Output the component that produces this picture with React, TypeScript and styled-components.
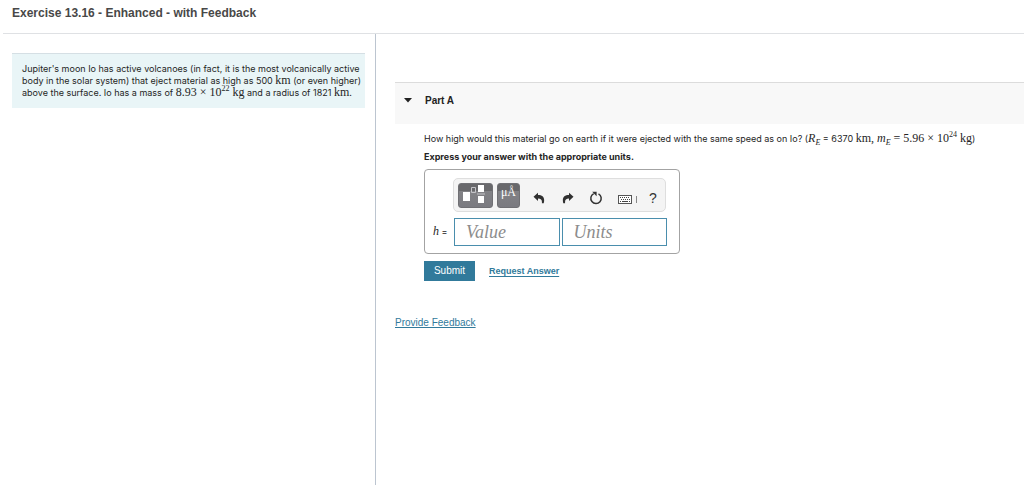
import React from "react";
import styled, { createGlobalStyle } from "styled-components";

const GlobalStyle = createGlobalStyle`
  * { box-sizing: border-box; }
  body {
    margin: 0;
    background: #fff;
    color: #252525;
    font-family: Inter, "Liberation Sans", Arial, sans-serif;
    font-size: 9px;
    line-height: 12px;
  }
`;

const Page = styled.div`
  min-height: 100vh;
  display: flex;
  flex-direction: column;
`;

const Header = styled.header`
  margin-left: 3px;
  padding: 5px 9px 12px;
  border-bottom: 1px solid #dfe1e4;
`;

const Title = styled.h1`
  margin: 0;
  font-family: "Liberation Sans", Arial, sans-serif;
  font-size: 12px;
  line-height: 16px;
  color: #484848;
`;

const Columns = styled.div`
  flex: 1;
  display: grid;
  grid-template-columns: 47fr 81fr;
`;

const Aside = styled.aside`
  padding: 19px 10px 0 12px;
  border-right: 1px solid #bcc5d0;
`;

const Intro = styled.p`
  margin: 0;
  padding: 9px 0 9px 10px;
  background: #e9f5f7;
  border-top: 1px solid #d5dfe4;
`;

const Main = styled.main`
  min-width: 0;
  padding: 48px 0 20px 19px;
`;

const PartHeader = styled.button`
  width: 100%;
  height: 42px;
  display: flex;
  align-items: flex-start;
  gap: 13px;
  padding: 12px 9px;
  border: 0;
  border-top: 1px solid #dcdcdc;
  background: #f8f8f8;
  color: #222;
  font: bold 10px/12px "Liberation Sans", Arial, sans-serif;
  text-align: left;
`;

const Caret = styled.svg`
  width: 8px;
  height: 12px;
`;

const PartBody = styled.section`
  padding: 9px 10px 0 29px;
`;

const Question = styled.p`
  margin: 0;
`;

const Instruction = styled.p`
  margin: 6px 0;
  font-weight: bold;
`;

const MathText = styled.span`
  font-family: "Liberation Serif", "Times New Roman", serif;
  font-size: 12px;
  line-height: 10px;
  white-space: nowrap;

  sup, sub {
    font-size: 8px;
    line-height: 0;
  }
`;

const AnswerBox = styled.div`
  width: 256px;
  height: 85px;
  padding: 8px 12px 7px 8px;
  display: grid;
  grid-template-columns: 20px 214px;
  grid-template-rows: 34px 28px;
  row-gap: 6px;
  border: 1px solid #a3a3a3;
  border-radius: 4px;
`;

const Toolbar = styled.div`
  grid-column: 2;
  display: flex;
  align-items: center;
  margin-right: 1px;
  padding: 0 4px;
  border: 1px solid #dedede;
  border-radius: 5px;
  background: #f4f4f4;
`;

const TemplateButton = styled.button<{ $wide?: boolean }>`
  flex: none;
  width: ${(p) => (p.$wide ? 35 : 23)}px;
  height: 25px;
  margin-right: ${(p) => (p.$wide ? 4 : 5)}px;
  padding: 0;
  border: 1px solid #707074;
  border-radius: 3px;
  background: linear-gradient(#68686b 0 30%, #828286 30%, #7a7a80);
  color: #fff;
  font: 12px/16px "Liberation Serif", "Times New Roman", serif;
  display: flex;
  justify-content: center;
`;

const ToolButton = styled.button<{ $wide?: boolean }>`
  flex: none;
  width: ${(p) => (p.$wide ? 29 : 28)}px;
  height: 32px;
  padding: 5px 0 0;
  border: 0;
  background: transparent;
  color: #333;
  font: 14px/24px "Liberation Sans", Arial, sans-serif;
  display: flex;
  align-items: center;
  justify-content: center;
`;

const Variable = styled.label`
  align-self: center;
  white-space: nowrap;
`;

const Fields = styled.div`
  display: grid;
  grid-template-columns: 1fr 1fr;
  gap: 2px;
  padding-left: 1px;
`;

const Field = styled.input`
  min-width: 0;
  width: 100%;
  height: 28px;
  padding: 0 11px;
  border: 1px solid #4a8ead;
  border-radius: 0;
  background: #fff;
  font: italic 18px/24px "Liberation Serif", "Times New Roman", serif;

  &::placeholder {
    color: #8c8c8c;
    opacity: 1;
  }
`;

const Actions = styled.div`
  display: flex;
  align-items: center;
  gap: 14px;
  margin-top: 7px;
`;

const Submit = styled.button`
  width: 51px;
  height: 20px;
  padding: 0;
  border: 0;
  background: #317a9b;
  color: #fff;
  font: 10px/20px "Liberation Sans", Arial, sans-serif;
`;

const Link = styled.a<{ $strong?: boolean }>`
  color: #317a9b;
  font-family: "Liberation Sans", Arial, sans-serif;
  font-size: ${(p) => (p.$strong ? 9 : 10)}px;
  font-weight: ${(p) => (p.$strong ? "bold" : "normal")};
  text-decoration: underline;
  text-underline-offset: ${(p) => (p.$strong ? 2 : 1)}px;
`;

const Footer = styled.footer`
  margin-top: 36px;
`;

const UndoArrow = ({ flip }: { flip?: boolean }) => (
  <svg width="12" height="12" viewBox="0 0 12 12" aria-hidden="true">
    <g transform={flip ? "translate(12 0) scale(-1 1)" : undefined}>
      <path d="M.5 4.800 5 .8v2.300c5 0 7.200 2.800 5.700 8.200H8.900C9.200 8.200 8.200 6.600 5 6.600v2.400Z" fill="#303030" />
    </g>
  </svg>
);

export default function App() {
  return (
    <Page>
      <GlobalStyle />
      <Header>
        <Title>Exercise 13.16 - Enhanced - with Feedback</Title>
      </Header>
      <Columns>
        <Aside>
          <Intro>
            Jupiter's moon Io has active volcanoes (in fact, it is the most volcanically active
            <br />
            body in the solar system) that eject material as high as 500 <MathText>km</MathText> (or
            even higher)
            <br />
            above the surface. Io has a mass of{" "}
            <MathText>8.93 × 10<sup>22</sup> kg</MathText> and a radius of 1821{" "}
            <MathText>km</MathText>.
          </Intro>
        </Aside>
        <Main>
          <PartHeader type="button" aria-expanded="true">
            <Caret viewBox="0 0 8 12" aria-hidden="true">
              <path d="M0 3h8L4 7.500Z" fill="#222" />
            </Caret>
            Part A
          </PartHeader>
          <PartBody>
            <Question>
              How high would this material go on earth if it were ejected with the same speed as on
              Io? (<MathText><i>R</i><sub><i>E</i></sub></MathText> = 6370{" "}
              <MathText>
                km, <i>m</i><sub><i>E</i></sub> = 5.96 × 10<sup>24</sup> kg
              </MathText>)
            </Question>
            <Instruction>Express your answer with the appropriate units.</Instruction>
            <AnswerBox>
              <Toolbar role="toolbar" aria-label="Answer tools">
                <TemplateButton type="button" $wide aria-label="Templates">
                  <svg width="33" height="23" viewBox="0 0 33 23" aria-hidden="true">
                    <path d="M4 8h7v9H4ZM19 1h6v7h-6ZM19 12h6v7h-6Z" fill="#fff" />
                    <path d="M12.500 3.500h4v5h-4ZM18 10h8" fill="none" stroke="#c4c4c8" />
                  </svg>
                </TemplateButton>
                <TemplateButton type="button">μÅ</TemplateButton>
                <ToolButton type="button" aria-label="Undo"><UndoArrow /></ToolButton>
                <ToolButton type="button" aria-label="Redo" $wide><UndoArrow flip /></ToolButton>
                <ToolButton type="button" aria-label="Reset">
                  <svg width="14" height="14" viewBox="0 0 14 14" aria-hidden="true">
                    <path d="M9.500 2.800a5.200 5.200 0 1 1-4.800-.1" fill="none" stroke="#333" strokeWidth="1.500" />
                    <path d="M3.200 .8h4.400v4.400Z" fill="#333" />
                  </svg>
                </ToolButton>
                <ToolButton type="button" aria-label="Keyboard shortcuts" $wide>
                  <svg width="26" height="12" viewBox="-6 0 26 12" aria-hidden="true">
                    <rect x=".5" y="3.500" width="13" height="8" fill="#fff" stroke="#555" />
                    <path d="M2 5.500h10M3 7.500h9" stroke="#444" strokeDasharray="1 1" />
                    <path d="M2 9.500h1M4 9.500h6M11 9.500h1" stroke="#444" />
                    <path d="M18.500 4v7" stroke="#888" />
                  </svg>
                </ToolButton>
                <ToolButton type="button" aria-label="Help">?</ToolButton>
              </Toolbar>
              <Variable htmlFor="value">
                <MathText><i>h</i></MathText> =
              </Variable>
              <Fields>
                <Field id="value" placeholder="Value" aria-label="Value" />
                <Field placeholder="Units" aria-label="Units" />
              </Fields>
            </AnswerBox>
            <Actions>
              <Submit type="submit">Submit</Submit>
              <Link href="#answer" $strong>Request Answer</Link>
            </Actions>
          </PartBody>
          <Footer>
            <Link href="#feedback">Provide Feedback</Link>
          </Footer>
        </Main>
      </Columns>
    </Page>
  );
}
